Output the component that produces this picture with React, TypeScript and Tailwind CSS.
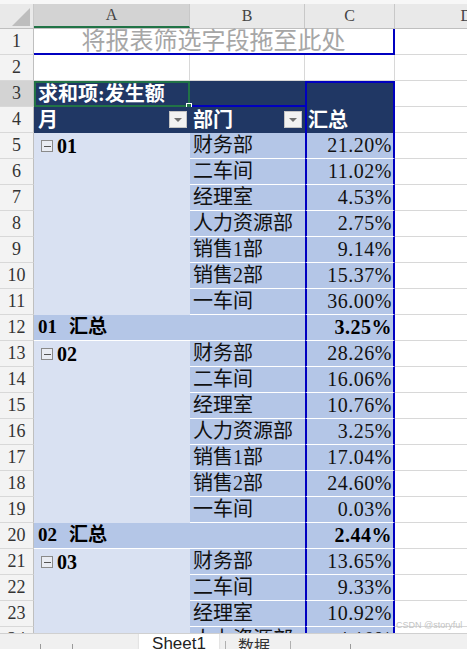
import React from "react";

const font = { fontFamily: '"Liberation Serif", "Noto Sans CJK SC", serif' };

type Item = { dept: string; pct: string };
type Group = { id: string; total: string; items: Item[] };

const groups: Group[] = [
  {
    id: "01",
    total: "3.25%",
    items: [
      { dept: "财务部", pct: "21.20%" },
      { dept: "二车间", pct: "11.02%" },
      { dept: "经理室", pct: "4.53%" },
      { dept: "人力资源部", pct: "2.75%" },
      { dept: "销售1部", pct: "9.14%" },
      { dept: "销售2部", pct: "15.37%" },
      { dept: "一车间", pct: "36.00%" },
    ],
  },
  {
    id: "02",
    total: "2.44%",
    items: [
      { dept: "财务部", pct: "28.26%" },
      { dept: "二车间", pct: "16.06%" },
      { dept: "经理室", pct: "10.76%" },
      { dept: "人力资源部", pct: "3.25%" },
      { dept: "销售1部", pct: "17.04%" },
      { dept: "销售2部", pct: "24.60%" },
      { dept: "一车间", pct: "0.03%" },
    ],
  },
  {
    id: "03",
    total: "",
    items: [
      { dept: "财务部", pct: "13.65%" },
      { dept: "二车间", pct: "9.33%" },
      { dept: "经理室", pct: "10.92%" },
      { dept: "人力资源部", pct: "4.10%" },
    ],
  },
];

function RowNum({ n, active }: { n: number; active?: boolean }) {
  return (
    <div
      className={`flex h-[26px] w-[34px] shrink-0 items-center justify-center border-b border-r border-b-[#d8d8d8] border-r-[#bfbfbf] text-[18px] text-[#333] ${
        active ? "bg-[#d3d3d3]" : "bg-[#f3f3f3]"
      }`}
    >
      {n}
    </div>
  );
}

function Dropdown() {
  return (
    <div className="absolute right-[3px] top-[4px] flex h-[17px] w-[18px] items-center justify-center border border-[#c4c4c4] bg-[#f2f2f2]">
      <div className="h-0 w-0 border-x-[4px] border-t-[4px] border-x-transparent border-t-[#707070]" />
    </div>
  );
}

function MinusBox() {
  return (
    <div className="mr-[4px] flex h-[12px] w-[12px] items-center justify-center border border-[#8a8a8a] bg-[#e9ecf3]">
      <div className="h-px w-[7px] bg-[#555]" />
    </div>
  );
}

function GridD() {
  return <div className="h-[26px] flex-1 border-b border-[#d8d8d8] bg-white" />;
}

export default function App() {
  let rowNo = 5;
  const dataRows: React.ReactNode[] = [];

  groups.forEach((g) => {
    g.items.forEach((it, i) => {
      const n = rowNo++;
      const last = i === g.items.length - 1;
      dataRows.push(
        <div key={`r${n}`} className="flex h-[26px]">
          <RowNum n={n} />
          <div className="flex h-[26px] w-[156px] shrink-0 items-center bg-[#d9e1f2] pl-[7px] leading-[26px]">
            {i === 0 && (
              <>
                <MinusBox />
                <span className="text-[20px] font-bold text-black">{g.id}</span>
              </>
            )}
          </div>
          <div
            className={`h-[26px] w-[115px] shrink-0 bg-[#b4c6e7] pl-[3px] text-[20px] leading-[25px] text-[#111] ${
              last && !g.total ? "" : "border-b border-white"
            }`}
          >
            {it.dept}
          </div>
          <div className="h-[26px] w-[90px] shrink-0 border-x-2 border-b border-x-[#0000c0] border-b-white bg-[#b4c6e7] pr-[1px] text-right text-[20px] leading-[25px] tracking-[0.5px] text-[#111]">
            {it.pct}
          </div>
          <GridD />
        </div>
      );
    });
    if (g.total) {
      const n = rowNo++;
      dataRows.push(
        <div key={`t${n}`} className="flex h-[26px]">
          <RowNum n={n} />
          <div className="flex h-[26px] w-[271px] shrink-0 items-center border-b border-white bg-[#b4c6e7] pl-[4px] text-[19px] font-bold text-black">
            <span>{g.id}</span>
            <span className="ml-[12px]">汇总</span>
          </div>
          <div className="h-[26px] w-[90px] shrink-0 border-x-2 border-b border-x-[#0000c0] border-b-white bg-[#b4c6e7] pr-[1px] text-right text-[20px] font-bold leading-[25px] tracking-[0.5px] text-black">
            {g.total}
          </div>
          <GridD />
        </div>
      );
    }
  });

  return (
    <div className="relative h-[649px] w-[467px] overflow-hidden bg-white" style={font}>
      <div className="h-[633px] overflow-hidden">
        {/* column headers */}
        <div className="h-[4px] bg-[#f7f7f7]" />
        <div className="flex h-[25px] border-b border-[#bfbfbf] bg-[#e9e9e9] text-[16px] text-[#444]">
          <div className="relative w-[34px] shrink-0 border-r border-[#c8c8c8]">
            <div className="absolute bottom-[2px] right-[3px] h-0 w-0 border-b-[18px] border-l-[18px] border-b-[#bdbdbd] border-l-transparent" />
          </div>
          <div className="flex w-[156px] shrink-0 items-center justify-center border-b-2 border-r border-b-[#217346] border-r-[#c8c8c8] bg-[#d3d3d3]">
            A
          </div>
          <div className="flex w-[115px] shrink-0 items-center justify-center border-r border-[#c8c8c8]">B</div>
          <div className="flex w-[90px] shrink-0 items-center justify-center border-r border-[#c8c8c8]">C</div>
          <div className="flex flex-1 items-center justify-end">
            <span className="-mr-[5px]">D</span>
          </div>
        </div>

        {/* row 1: filter drop area */}
        <div className="flex h-[26px]">
          <RowNum n={1} />
          <div className="flex h-[26px] w-[361px] shrink-0 items-center justify-center border-b-2 border-r-2 border-[#0000c0] text-[24px] leading-[24px] text-[#a6a6a6]">
            将报表筛选字段拖至此处
          </div>
          <GridD />
        </div>

        {/* row 2 */}
        <div className="flex h-[26px]">
          <RowNum n={2} />
          <div className="h-[26px] w-[156px] shrink-0 border-b border-r border-[#d8d8d8]" />
          <div className="h-[26px] w-[115px] shrink-0 border-b border-r border-[#d8d8d8]" />
          <div className="h-[26px] w-[90px] shrink-0 border-b border-r border-[#d8d8d8]" />
          <GridD />
        </div>

        {/* rows 3-4: pivot header */}
        <div className="flex h-[52px]">
          <div className="flex flex-col">
            <RowNum n={3} active />
            <RowNum n={4} />
          </div>
          <div className="flex flex-col">
            <div className="flex h-[26px]">
              <div className="relative h-[26px] w-[156px] shrink-0 border-2 border-[#217346] bg-[#203764] pl-[2px] text-[20px] font-bold leading-[22px] text-white">
                求和项:发生额
                <div className="absolute -bottom-[4px] -right-[4px] h-[6px] w-[6px] border border-white bg-[#217346]" />
              </div>
              <div className="h-[26px] w-[115px] shrink-0 border-b-2 border-[#0000c0] bg-[#203764]" />
            </div>
            <div className="flex h-[26px]">
              <div className="relative h-[26px] w-[156px] shrink-0 bg-[#203764] pl-[4px] text-[20px] font-bold leading-[26px] text-white">
                月
                <Dropdown />
              </div>
              <div className="relative h-[26px] w-[115px] shrink-0 bg-[#203764] pl-[3px] text-[20px] font-bold leading-[26px] text-white">
                部门
                <Dropdown />
              </div>
            </div>
          </div>
          <div className="flex h-[52px] w-[90px] shrink-0 items-end border-x-2 border-t-2 border-[#0000c0] bg-[#203764] pb-[1px] pl-[1px] text-[20px] font-bold leading-[24px] text-white">
            汇总
          </div>
          <div className="flex flex-1 flex-col">
            <GridD />
            <GridD />
          </div>
        </div>

        {dataRows}
      </div>

      {/* sheet tabs */}
      <div
        className="relative h-[16px] overflow-hidden border-t border-[#d0d0d0] bg-[#f0f0f0]"
        style={{ fontFamily: '"Liberation Sans", "Noto Sans CJK SC", sans-serif' }}
      >
        <div className="absolute bottom-0 left-[40px] h-[5px] w-px bg-[#9a9a9a]" />
        <div className="absolute bottom-0 left-[72px] h-[5px] w-px bg-[#9a9a9a]" />
        <div className="absolute -top-px left-[139px] h-[18px] w-[80px] bg-white text-center text-[17px] leading-[22px] text-[#222] shadow-[0_-1px_2px_rgba(0,0,0,0.15)]">
          Sheet1
        </div>
        <div className="absolute bottom-0 left-[225px] h-[8px] w-px bg-[#b0b0b0]" />
        <div className="absolute left-[238px] top-[5px] text-[16px] leading-[16px] text-[#333]">数据</div>
        <div className="absolute bottom-0 left-[290px] h-[8px] w-px bg-[#b0b0b0]" />
        <div className="absolute bottom-0 left-[350px] h-[5px] w-px bg-[#9a9a9a]" />
      </div>

      {/* watermark */}
      <div
        className="pointer-events-none absolute left-[396px] top-[620px] whitespace-nowrap text-[9px] leading-[11px] text-[#c4c4c4]"
        style={{ fontFamily: '"Liberation Sans", sans-serif' }}
      >
        CSDN @storyful
      </div>
    </div>
  );
}
